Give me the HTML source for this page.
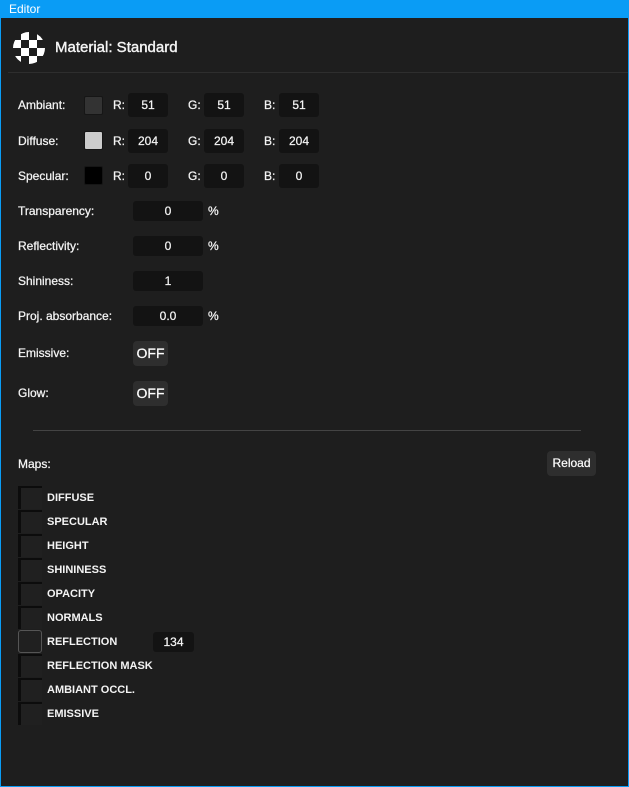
<!DOCTYPE html>
<html><head><meta charset="utf-8"><style>
*{margin:0;padding:0;box-sizing:border-box}
body{width:629px;height:787px;background:#1e1e1e;font-family:"Liberation Sans",sans-serif;color:#f4f4f4;position:relative;overflow:hidden;font-size:12px;-webkit-text-stroke:0.25px #f4f4f4}
.abs{position:absolute}
.frame{position:absolute;left:0;top:0;width:629px;height:787px;border:1px solid #0a9cf5;border-top:none}
.title{left:0;top:0;width:629px;height:18px;background:#0a9cf5;color:#fff;font-size:12px;line-height:18px;padding-left:9px;-webkit-text-stroke:0}
.lbl{position:absolute;left:18px;line-height:14px}
.in{position:absolute;background:#131313;border-radius:3px;text-align:center;color:#f4f4f4}
.btn{position:absolute;background:#2e2e2e;border-radius:4px;text-align:center;color:#fff}
.cb{position:absolute;left:18px;width:24px;height:23px;background:#202020;border-top:2px solid #0c0c0c;border-left:3px solid #0c0c0c}
.ml{position:absolute;left:47px;font-weight:bold;font-size:11px;line-height:14px;-webkit-text-stroke:0}
</style></head><body>
<div class="abs title">Editor</div>
<svg class="abs" style="left:13px;top:32px" width="32" height="32" viewBox="0 0 32 32">
<defs><clipPath id="c"><circle cx="16" cy="16" r="16"/></clipPath></defs>
<g clip-path="url(#c)" fill="#fff">
<rect x="8" y="0" width="8" height="8"/><rect x="24" y="0" width="8" height="8"/>
<rect x="0" y="8" width="8" height="8"/><rect x="16" y="8" width="8" height="8"/>
<rect x="8" y="16" width="8" height="8"/><rect x="24" y="16" width="8" height="8"/>
<rect x="0" y="24" width="8" height="8"/><rect x="16" y="24" width="8" height="8"/>
</g></svg>
<div class="abs" style="left:55px;top:39px;font-size:15px;line-height:18px;-webkit-text-stroke:0.4px #f4f4f4">Material: Standard</div>
<div class="abs" style="left:8px;top:72px;width:621px;height:1px;background:#2e2e2e"></div>

<div class="lbl" style="top:98px">Ambiant:</div>
<div class="abs" style="left:84px;top:96px;width:19px;height:19px;background:#333;border:1px solid #161616;border-radius:2px"></div>
<div class="lbl" style="top:134px">Diffuse:</div>
<div class="abs" style="left:84px;top:131px;width:19px;height:19px;background:#ccc;border:1px solid #161616;border-radius:2px"></div>
<div class="lbl" style="top:169px">Specular:</div>
<div class="abs" style="left:84px;top:166px;width:19px;height:19px;background:#000;border:1px solid #161616;border-radius:2px"></div>

<div class="abs" style="left:113px;top:98px;line-height:14px">R:</div>
<div class="abs" style="left:188px;top:98px;line-height:14px">G:</div>
<div class="abs" style="left:264px;top:98px;line-height:14px">B:</div>
<div class="in" style="left:128px;top:93px;width:40px;height:24px;line-height:24px">51</div>
<div class="in" style="left:204px;top:93px;width:40px;height:24px;line-height:24px">51</div>
<div class="in" style="left:279px;top:93px;width:40px;height:24px;line-height:24px">51</div>

<div class="abs" style="left:113px;top:134px;line-height:14px">R:</div>
<div class="abs" style="left:188px;top:134px;line-height:14px">G:</div>
<div class="abs" style="left:264px;top:134px;line-height:14px">B:</div>
<div class="in" style="left:128px;top:129px;width:40px;height:24px;line-height:24px">204</div>
<div class="in" style="left:204px;top:129px;width:40px;height:24px;line-height:24px">204</div>
<div class="in" style="left:279px;top:129px;width:40px;height:24px;line-height:24px">204</div>

<div class="abs" style="left:113px;top:169px;line-height:14px">R:</div>
<div class="abs" style="left:188px;top:169px;line-height:14px">G:</div>
<div class="abs" style="left:264px;top:169px;line-height:14px">B:</div>
<div class="in" style="left:128px;top:164px;width:40px;height:24px;line-height:24px">0</div>
<div class="in" style="left:204px;top:164px;width:40px;height:24px;line-height:24px">0</div>
<div class="in" style="left:279px;top:164px;width:40px;height:24px;line-height:24px">0</div>

<div class="lbl" style="top:204px">Transparency:</div>
<div class="in" style="left:133px;top:201px;width:70px;height:20px;line-height:20px">0</div>
<div class="abs" style="left:208px;top:204px;line-height:14px">%</div>
<div class="lbl" style="top:239px">Reflectivity:</div>
<div class="in" style="left:133px;top:236px;width:70px;height:20px;line-height:20px">0</div>
<div class="abs" style="left:208px;top:239px;line-height:14px">%</div>
<div class="lbl" style="top:274px">Shininess:</div>
<div class="in" style="left:133px;top:271px;width:70px;height:20px;line-height:20px">1</div>
<div class="lbl" style="top:309px">Proj. absorbance:</div>
<div class="in" style="left:133px;top:306px;width:70px;height:20px;line-height:20px">0.0</div>
<div class="abs" style="left:208px;top:309px;line-height:14px">%</div>

<div class="lbl" style="top:346px">Emissive:</div>
<div class="btn" style="left:133px;top:341px;width:35px;height:25px;line-height:25px;font-size:14px">OFF</div>
<div class="lbl" style="top:386px">Glow:</div>
<div class="btn" style="left:133px;top:381px;width:35px;height:25px;line-height:25px;font-size:14px">OFF</div>

<div class="abs" style="left:33px;top:430px;width:548px;height:1px;background:#444"></div>
<div class="lbl" style="top:457px">Maps:</div>
<div class="btn" style="left:547px;top:451px;width:49px;height:25px;line-height:25px;font-size:12px">Reload</div>

<div class="cb" style="top:486px"></div><div class="ml" style="top:491px">DIFFUSE</div>
<div class="cb" style="top:510px"></div><div class="ml" style="top:515px">SPECULAR</div>
<div class="cb" style="top:534px"></div><div class="ml" style="top:539px">HEIGHT</div>
<div class="cb" style="top:558px"></div><div class="ml" style="top:563px">SHININESS</div>
<div class="cb" style="top:582px"></div><div class="ml" style="top:587px">OPACITY</div>
<div class="cb" style="top:606px"></div><div class="ml" style="top:611px">NORMALS</div>
<div class="abs" style="left:18px;top:630px;width:24px;height:23px;background:#202020;border:1px solid #555;border-radius:3px"></div><div class="ml" style="top:635px">REFLECTION</div>
<div class="in" style="left:153px;top:632px;width:41px;height:20px;line-height:20px">134</div>
<div class="cb" style="top:654px"></div><div class="ml" style="top:659px">REFLECTION MASK</div>
<div class="cb" style="top:678px"></div><div class="ml" style="top:683px">AMBIANT OCCL.</div>
<div class="cb" style="top:702px"></div><div class="ml" style="top:707px">EMISSIVE</div>
<div class="frame"></div>
</body></html>
